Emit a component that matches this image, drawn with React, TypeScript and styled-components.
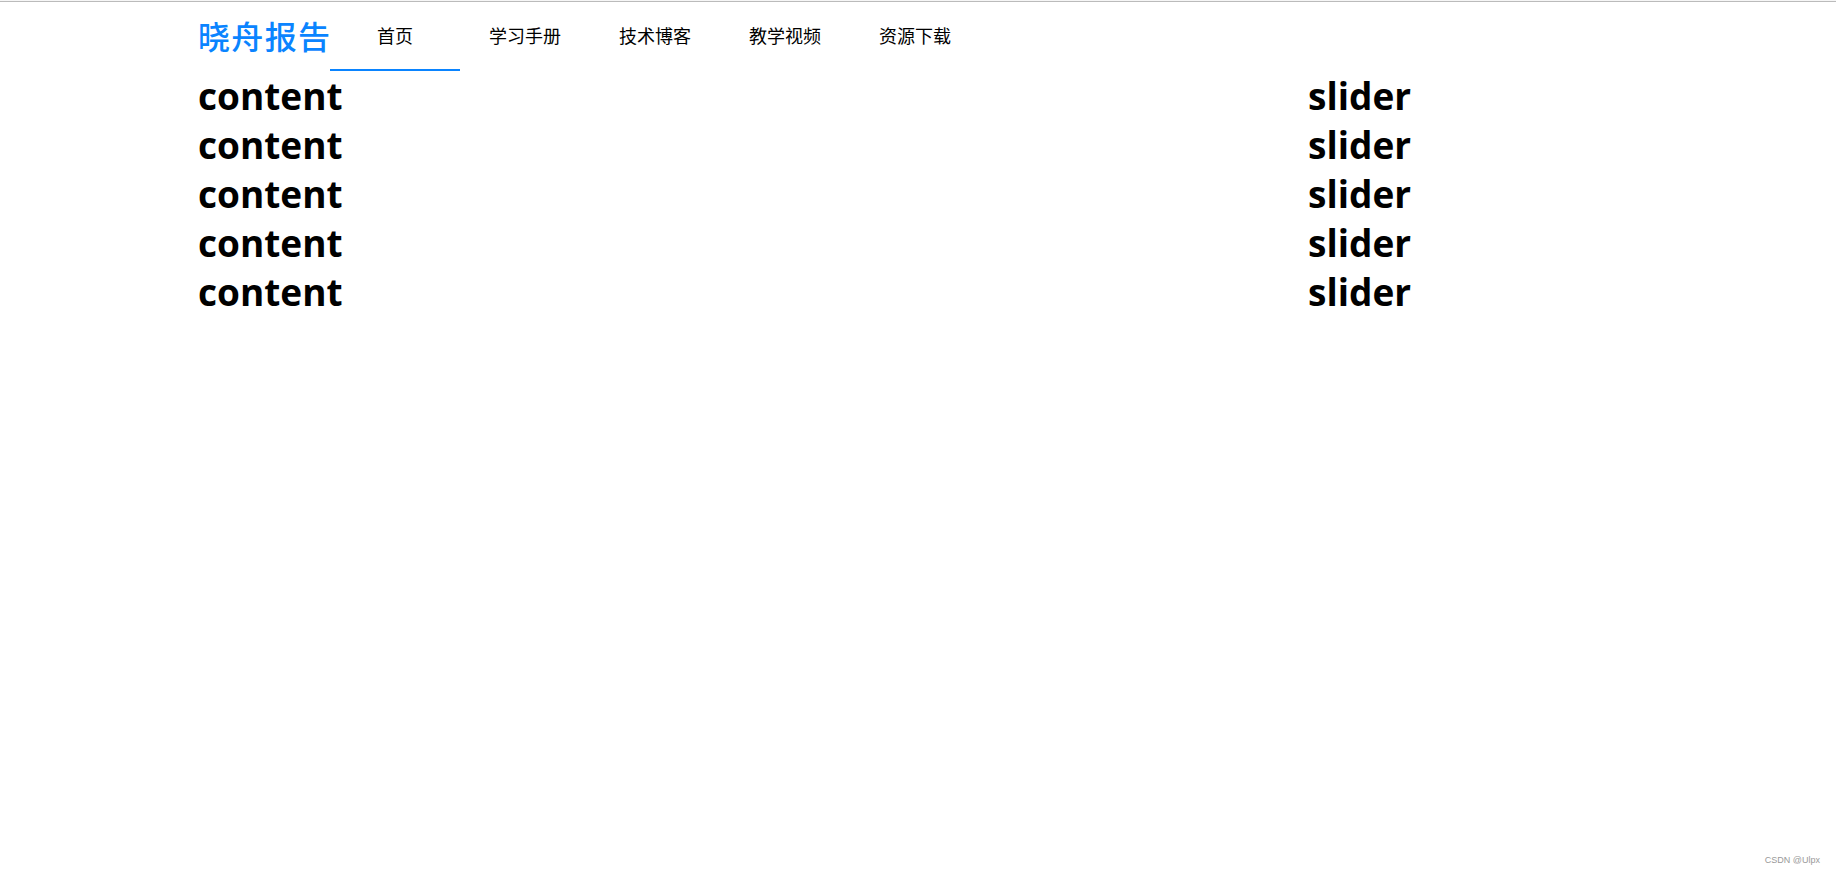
import React from "react";
import styled, { createGlobalStyle } from "styled-components";

const GlobalStyle = createGlobalStyle`
  *, *::before, *::after { box-sizing: border-box; }
  body {
    margin: 0;
    background: #fff;
    color: #000;
    font-family: "Open Sans", "Noto Sans CJK SC", sans-serif;
  }
`;

const Page = styled.div`
  min-height: 100vh;
  display: flex;
  flex-direction: column;
  border-top: 1px solid #f6f6f6;
`;

const Header = styled.header`
  border-top: 1px solid #bbb;
`;

const Container = styled.div`
  display: flex;
  width: 100%;
  max-width: 1440px;
  margin: 0 auto;
`;

const Logo = styled.a`
  display: flex;
  justify-content: space-between;
  width: 132px;
  color: #0a84ff;
  font-family: "Noto Sans CJK SC", sans-serif;
  font-size: 32px;
  font-weight: 500;
  line-height: 66px;
  text-decoration: none;
`;

const Nav = styled.nav`
  display: flex;
`;

const NavLink = styled.a<{ $active?: boolean }>`
  width: 130px;
  height: 69px;
  border-bottom: 2px solid ${(p) => (p.$active ? "#0a84ff" : "transparent")};
  color: #000;
  font-family: "Noto Sans CJK SC", sans-serif;
  font-size: 18px;
  font-weight: 400;
  line-height: 66px;
  text-align: center;
  text-decoration: none;
`;

const Main = styled.main`
  flex: 1;
  min-width: 0;
`;

const Sidebar = styled.aside`
  width: 330px;
`;

const Title = styled.h1`
  margin: 0;
  font-size: 37px;
  font-weight: 700;
  line-height: 49px;
`;

const Credit = styled.footer`
  margin-top: auto;
  padding: 0 16px 9px;
  color: #999;
  font-family: "Liberation Sans", sans-serif;
  font-size: 9px;
  line-height: 12px;
  text-align: right;
`;

const links = ["首页", "学习手册", "技术博客", "教学视频", "资源下载"];
const rows = [1, 2, 3, 4, 5];

export default function App() {
  return (
    <Page>
      <GlobalStyle />
      <Header>
        <Container>
          <Logo href="#" aria-label="晓舟报告">
            {Array.from("晓舟报告").map((c) => (
              <span key={c}>{c}</span>
            ))}
          </Logo>
          <Nav>
            {links.map((label, i) => (
              <NavLink key={label} href="#" $active={i === 0}>
                {label}
              </NavLink>
            ))}
          </Nav>
        </Container>
      </Header>
      <Container>
        <Main>
          {rows.map((n) => (
            <Title key={n}>content</Title>
          ))}
        </Main>
        <Sidebar>
          {rows.map((n) => (
            <Title key={n}>slider</Title>
          ))}
        </Sidebar>
      </Container>
      <Credit>CSDN @Ulpx</Credit>
    </Page>
  );
}
